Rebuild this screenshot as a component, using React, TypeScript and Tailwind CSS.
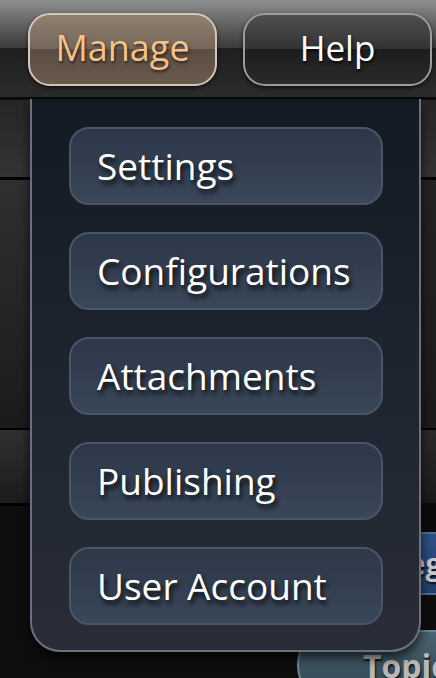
import React from 'react';

const menuItems = ['Settings', 'Configurations', 'Attachments', 'Publishing', 'User Account'];

const App = () => {
  return (
    <div className="relative w-[436px] h-[678px] overflow-hidden bg-[#0e0e0e] font-['Open_Sans',sans-serif]">
      {/* Top bar */}
      <header className="h-[100px] border-b-[3px] border-[#0a0a0a] bg-[linear-gradient(to_bottom,#8e8e8e_0%,#5a5a5a_30%,#3c3c3c_49%,#1f1f1f_50%,#2c2c2c_100%)] flex items-start gap-[26px] pl-[28px] pt-[13px]">
        <button className="w-[189px] h-[73px] rounded-[22px] border-2 border-[#cfc6bc] bg-[linear-gradient(to_bottom,#8f8070_0%,#75675a_49%,#5b4d41_50%,#6a5b4d_100%)] shadow-[0_2px_4px_rgba(0,0,0,0.6)] text-[36px] leading-none pb-[4px] text-[#f6c28a] [text-shadow:1px_2px_3px_rgba(0,0,0,0.6)]">
          Manage
        </button>
        <button className="w-[189px] h-[73px] rounded-[22px] border-2 border-[#9c9c9c] bg-[linear-gradient(to_bottom,#4e4e4e_0%,#333333_49%,#1d1d1d_50%,#2a2a2a_100%)] shadow-[0_2px_4px_rgba(0,0,0,0.6)] text-[35px] leading-none pb-[4px] text-white [text-shadow:1px_2px_3px_rgba(0,0,0,0.8)]">
          Help
        </button>
      </header>

      {/* Underlying page rows */}
      <div className="flex justify-between">
        <div className="w-[31px] flex flex-col">
          <div className="h-[77px] bg-[linear-gradient(to_bottom,#262626,#343434)]" />
          <div className="h-[3px] bg-black" />
          <div className="h-[248px] bg-[linear-gradient(to_bottom,#303030,#1b1b1b)]" />
          <div className="h-[2px] bg-black" />
          <div className="h-[73px] bg-[linear-gradient(to_bottom,#2f2f2f,#1c1c1c)]" />
          <div className="h-[3px] bg-black" />
        </div>
        <div className="w-[60px] flex flex-col">
          <div className="h-[77px] bg-[linear-gradient(to_bottom,#262626,#343434)]" />
          <div className="h-[3px] bg-black" />
          <div className="h-[248px] bg-[linear-gradient(to_bottom,#242424,#1b1b1b)]" />
          <div className="h-[2px] bg-black" />
          <div className="h-[73px] bg-[linear-gradient(to_bottom,#2a2a2a,#1a1a1a)]" />
          <div className="h-[29px] bg-[#0c0c0c]" />
          <div className="h-[63px] rounded-l-[10px] border-y-2 border-l-2 border-[#4f6f9c] bg-[linear-gradient(to_bottom,#2e5186,#23406c)] flex items-center overflow-hidden">
            <span className="text-[30px] font-bold text-[#c9c9c9] pl-[10px] whitespace-nowrap [text-shadow:1px_2px_2px_rgba(0,0,0,0.8)]">Reg</span>
          </div>
        </div>
      </div>

      {/* Topic pill behind the menu */}
      <div className="absolute left-[297px] top-[630px] w-[180px] h-[70px] rounded-[34px] border-2 border-[#6e8795] bg-[linear-gradient(to_bottom,#4b6574,#2f4450)] pl-[64px] pt-[10px]">
        <span className="text-[32px] font-bold text-[#b8b8b8] [text-shadow:1px_2px_2px_rgba(0,0,0,0.8)]">Topic</span>
      </div>

      {/* Dropdown menu */}
      <div className="absolute left-[30px] top-[99px] w-[391px] h-[553px] rounded-b-[30px] border-2 border-t-0 border-[#6b7079] bg-[linear-gradient(to_bottom,#131a23,#1f2530_50%,#282d37)] shadow-[0_6px_12px_rgba(0,0,0,0.7)] pt-[28px] pl-[37px] flex flex-col gap-[27px]">
        {menuItems.map((item) => (
          <div
            key={item}
            className="w-[314px] h-[78px] rounded-[20px] border-2 border-[#4b5567] bg-[linear-gradient(to_bottom,#2c3748,#3a4759)] flex items-center pl-[26px] pb-[2px] text-[37px] leading-none text-white [text-shadow:2px_4px_5px_rgba(0,0,0,0.85)]"
          >
            {item}
          </div>
        ))}
      </div>
    </div>
  );
};

export default App;
